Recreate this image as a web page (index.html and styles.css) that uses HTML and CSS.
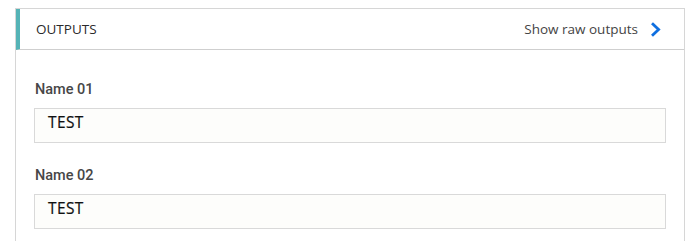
FILE: index.html
```html
<!DOCTYPE html>
<html>
<head>
<meta charset="utf-8">
<link rel="stylesheet" href="styles.css">
</head>
<body>
<div class="panel">
  <div class="header">
    <span class="title">OUTPUTS</span>
    <a class="raw">Show raw outputs
      <svg class="chev" width="13" height="15" viewBox="0 0 13 15"><path d="M3 1.2 L9.6 7.5 L3 13.8" fill="none" stroke="#0f6fe0" stroke-width="2.8"/></svg>
    </a>
  </div>
  <div class="content">
    <div class="field">
      <div class="label">Name 01</div>
      <div class="box">TEST</div>
    </div>
    <div class="field">
      <div class="label">Name 02</div>
      <div class="box">TEST</div>
    </div>
  </div>
</div>
</body>
</html>
```
FILE: styles.css
```css
html, body { margin: 0; padding: 0; background: #fff; }
body { padding: 8px 13px 0 15px; font-family: "Open Sans", "Noto Sans", sans-serif; color: #333; }
.panel { border: 1px solid #d6d6d6; border-bottom: none; height: 240px; box-sizing: border-box; }
.header { height: 41px; box-sizing: border-box; border-bottom: 1px solid #cfcfcf; border-left: 4px solid #55b3b6; display: flex; align-items: center; justify-content: space-between; padding: 0 22px 0 16px; }
.title { font-size: 13.5px; color: #2a2a2a; }
.raw { font-size: 13.5px; color: #444; display: flex; align-items: center; gap: 11px; }
.chev { display: block; }
.content { padding: 30px 18px 0 18px; display: flex; flex-direction: column; gap: 23px; }
.label { font-family: "Roboto", sans-serif; font-size: 14.5px; font-weight: 500; color: #474747; line-height: 20px; margin-bottom: 8px; padding-left: 1px; }
.box { height: 35px; box-sizing: border-box; border: 1px solid #d9d9d9; background: #fdfdfb; padding: 2px 13px; font-size: 15.5px; color: #111; line-height: 22px; letter-spacing: 0.4px; -webkit-text-stroke: 0.2px #111; }
```
